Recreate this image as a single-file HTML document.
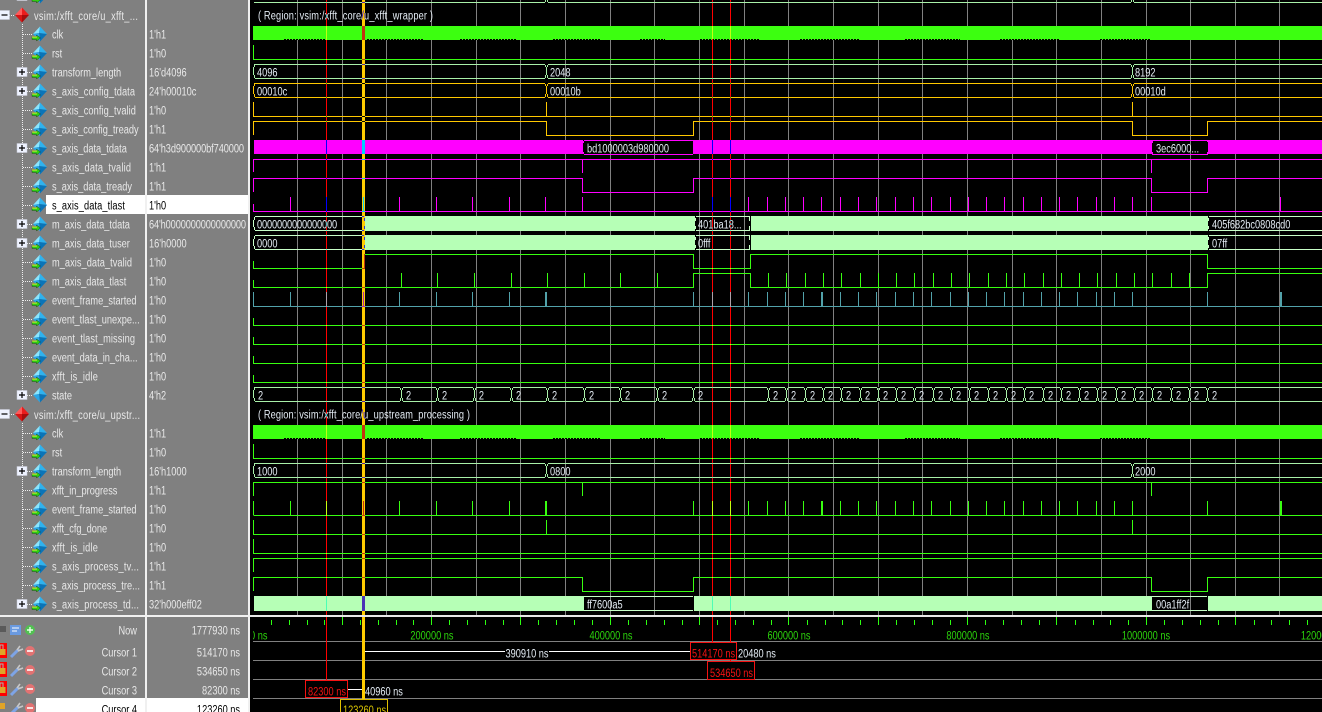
<!DOCTYPE html>
<html><head><meta charset="utf-8"><title>Wave</title>
<style>
html,body{margin:0;padding:0;background:#000;overflow:hidden}
svg{display:block;font-family:"Liberation Sans",sans-serif;font-size:12px}
.w{fill:none;stroke-width:1;shape-rendering:crispEdges}
.n{fill:#e8e8e8}
.t{fill:#e4ecf4}
.r{fill:#2cd40c}
.k{fill:#000}
.red{fill:#f41212}
</style></head><body>
<svg width="1322" height="712" viewBox="0 0 1322 712" xmlns="http://www.w3.org/2000/svg">
<defs>
<path id="f" d="M290.5 0v14M326.5 0v14M363.5 0v14M399.5 0v14M436.5 0v14M472.5 0v14M509.5 0v14M545.5 0v14M546.5 0v14M693.5 0v14M712.5 0v14M730.5 0v14M748.5 0v14M767.5 0v14M785.5 0v14M803.5 0v14M821.5 0v14M822.5 0v14M840.5 0v14M858.5 0v14M876.5 0v14M895.5 0v14M913.5 0v14M931.5 0v14M950.5 0v14M968.5 0v14M986.5 0v14M1004.5 0v14M1023.5 0v14M1041.5 0v14M1059.5 0v14M1077.5 0v14M1096.5 0v14M1114.5 0v14M1132.5 0v14M1207.5 0v14M1280.5 0v14M1281.5 0v14"/>
<g id="c"><rect x="-1" y="-7" width="3" height="1" fill="#000" stroke="none"/><rect x="-1" y="7" width="3" height="1" fill="#000" stroke="none"/><path d="M-.5 -6V-4M1.5 -6V-4M.5 -4V4M-.5 4V7M1.5 4V7" fill="none"/></g>
<path id="s" d="M1.5 -7V-4M.5 -4V4M1.5 4V7" fill="none"/>
<g id="dm"><polygon points="-7,0 0,-7.5 -1,-1" fill="#8ae6ff"/><polygon points="0,-7.5 7,0 -1,-1" fill="#2fb2ee"/><polygon points="7,0 0,7.5 -1,-1" fill="#0a74b8"/><polygon points="0,7.5 -7,0 -1,-1" fill="#2aa6e6"/></g>
<g id="a"><use href="#dm"/><polygon points="-8,2.5 -3.5,2.5 -3.5,1 0.5,4 -3.5,7 -3.5,5.5 -8,5.5" fill="#2fcf14" stroke="#14300c" stroke-width=".4"/><path d="M-8 3H-3" stroke="#e8f040" stroke-width="1"/></g>
<g id="rd"><polygon points="-7,0 0,-7.5 0,0" fill="#ff5a5a"/><polygon points="0,-7.5 7,0 0,0" fill="#ea1c1c"/><polygon points="7,0 0,7.5 0,0" fill="#a80c0c"/><polygon points="0,7.5 -7,0 0,0" fill="#d81414"/></g>
<g id="p"><rect x="-5" y="-4.5" width="10" height="9" fill="#eef2ff" stroke="#c8ccd8" stroke-width=".5"/><path d="M-3 0H3M0 -3V3" stroke="#000" stroke-width="1.2"/></g>
<g id="m"><rect x="-5" y="-4.5" width="10" height="9" fill="#eef2ff" stroke="#c8ccd8" stroke-width=".5"/><path d="M-3 0H3" stroke="#000" stroke-width="1.2"/></g>
<g id="tb"><path d="M11 657L19 649" stroke="#7ea4e6" stroke-width="3"/><path d="M17 650L20 646M18 651L23 649" stroke="#c8c8c8" stroke-width="1.6"/><circle cx="30" cy="651" r="5" fill="#e27272"/><path d="M27 651H33" stroke="#fff" stroke-width="1.6"/></g>
<g id="lk"><rect x="0" y="643" width="7" height="15" fill="#f00"/><rect x="0" y="649" width="5.5" height="6" fill="#e0a428"/><path d="M0 649V645H3V649" fill="none" stroke="#b0b0b0" stroke-width="1"/></g>
<clipPath id="cr"><rect x="253" y="617" width="1069" height="25"/></clipPath>
</defs>

<rect width="1322" height="712" fill="#000"/>

<!-- grid -->
<path class="w" stroke="#808080" d="M297.5 0V615M342.5 0V615M386.5 0V615M431.5 0V615M476.5 0V615M520.5 0V615M565.5 0V615M610.5 0V615M654.5 0V615M699.5 0V615M744.5 0V615M788.5 0V615M833.5 0V615M878.5 0V615M922.5 0V615M967.5 0V615M1012.5 0V615M1056.5 0V615M1101.5 0V615M1146.5 0V615M1190.5 0V615M1235.5 0V615M1279.5 0V615"/>

<!-- fills -->
<rect x="253" y="26" width="1069" height="14" fill="#3cff10"/>
<path class="w" stroke="#000" stroke-dasharray="2 1" d="M284 39.5H325M367 39.5H423M460 39.5H517M553 39.5H600M640 39.5H665M700 39.5H760M800 39.5H860M905 39.5H960M1000 39.5H1060M1100 39.5H1150"/>
<rect x="253" y="425" width="1069" height="14" fill="#3cff10"/>
<path class="w" stroke="#000" stroke-dasharray="2 1" d="M284 438.5H325M367 438.5H423M460 438.5H517M553 438.5H600M640 438.5H665M700 438.5H760M800 438.5H860M905 438.5H960M1000 438.5H1060M1100 438.5H1150"/>

<rect x="254" y="140" width="329" height="14" fill="#ff00ff"/>
<rect x="693" y="140" width="459" height="14" fill="#ff00ff"/>
<rect x="1208" y="140" width="114" height="14" fill="#ff00ff"/>
<rect x="365" y="216" width="330" height="15" fill="#b6ffb6"/>
<rect x="751" y="216" width="457" height="15" fill="#b6ffb6"/>
<rect x="365" y="235" width="330" height="15" fill="#b6ffb6"/>
<rect x="751" y="235" width="457" height="15" fill="#b6ffb6"/>
<rect x="254" y="596" width="330" height="15" fill="#b6ffb6"/>
<rect x="694" y="596" width="458" height="15" fill="#b6ffb6"/>
<rect x="1208" y="596" width="114" height="15" fill="#b6ffb6"/>

<!-- partial row at top -->
<g class="w" stroke="#a8f0a8"><path d="M254 2.5H1322"/><use href="#c" x="546" y="-5"/><use href="#c" x="1132" y="-5"/></g>

<!-- transform_length -->
<g class="w" stroke="#a8f0a8"><path d="M255 64.5H1322M255 78.5H1322"/><use href="#s" x="253" y="71"/><use href="#c" x="546" y="71"/><use href="#c" x="1132" y="71"/></g>
<!-- config tdata -->
<g class="w" stroke="#ffc800"><path d="M255 83.5H1322M255 97.5H1322"/><use href="#s" x="253" y="90"/><use href="#c" x="546" y="90"/><use href="#c" x="1132" y="90"/>
<path d="M253.5 102V116.5H1322M546.5 102V116M1132.5 102V116"/>
<path d="M253.5 135V121.5H546.5V135.5H693.5V121.5H1132.5V135.5H1207.5V121.5H1322"/></g>
<!-- magenta -->
<g class="w" stroke="#ff00ff">
<path d="M584 140.5H693M584 154.5H693M1152 140.5H1207M1152 154.5H1207M583.5 141V143M583.5 152V154M693.5 141V143M693.5 152V154M1152.5 141V143M1152.5 152V154M1207.5 140V142M1207.5 152V155"/>
<path d="M253.5 172V159.5H1322M582.5 160V173M1151.5 160V173"/>
<path d="M253.5 192V178.5H582.5V192.5H693.5V178.5H1151.5V192.5H1207.5V178.5H1322"/>
<path d="M253.5 204V211.5H1322M290.5 197v14M326.5 197v14M363.5 197v14M399.5 197v14M436.5 197v14M472.5 197v14M509.5 197v14M545.5 197v14M582.5 197v14M712.5 197v14M730.5 197v14M748.5 197v14M767.5 197v14M785.5 197v14M803.5 197v14M821.5 197v14M840.5 197v14M858.5 197v14M876.5 197v14M895.5 197v14M913.5 197v14M931.5 197v14M950.5 197v14M968.5 197v14M986.5 197v14M1004.5 197v14M1023.5 197v14M1041.5 197v14M1059.5 197v14M1077.5 197v14M1096.5 197v14M1114.5 197v14M1132.5 197v14M1151.5 197v14M1280.5 197v14"/>
</g>
<!-- m_axis buses -->
<g class="w" stroke="#c8ffc8">
<path d="M255 216.5H364M255 230.5H364M696 216.5H750M696 230.5H750M1209 216.5H1322M1209 230.5H1322M254.5 217V220M253.5 220V227M254.5 227V230M364.5 218V221M364.5 226V229M695.5 218V221M695.5 226V229M749.5 217V221M749.5 226V230M1208.5 218V221M1208.5 226V229"/>
<path d="M255 235.5H364M255 249.5H364M696 235.5H750M696 249.5H750M1209 235.5H1322M1209 249.5H1322M254.5 236V239M253.5 239V246M254.5 246V249M364.5 237V240M364.5 245V248M695.5 237V240M695.5 245V248M749.5 236V240M749.5 245V249M1208.5 237V240M1208.5 245V248"/>
</g>
<!-- greens -->
<g class="w" stroke="#38ff10">
<path d="M253.5 45V59.5H1322"/>
<path d="M253.5 261V268.5H364.5V254.5H693.5V268.5H750.5V254.5H1207.5V268.5H1322"/>
<path d="M253.5 280V287.5H693.5V273.5H750.5V287.5H1207.5V273.5H1322M401.5 273v14M437.5 273v14M474.5 273v14M511.5 273v14M547.5 273v14M584.5 273v14M620.5 273v14M657.5 273v14M768.5 273v14M786.5 273v14M805.5 273v14M823.5 273v14M841.5 273v14M860.5 273v14M878.5 273v14M896.5 273v14M914.5 273v14M933.5 273v14M951.5 273v14M969.5 273v14M988.5 273v14M1006.5 273v14M1024.5 273v14M1043.5 273v14M1061.5 273v14M1079.5 273v14M1097.5 273v14M1116.5 273v14M1134.5 273v14M1152.5 273v14M1171.5 273v14M1189.5 273v14"/>
<path d="M253.5 318V325.5H1322M253.5 337V344.5H1322M253.5 356V363.5H1322M253.5 375V382.5H1322"/>
<path d="M253.5 444V458.5H1322"/>
<path d="M253.5 496V482.5H1322M582.5 483V496M1151.5 483V496"/>
<path d="M253.5 515.5H1322M253.5 501v14"/>
<use href="#f" y="501"/>
<path d="M253.5 520V534.5H1322M546.5 520V534M1132.5 520V534"/>
<path d="M253.5 539V553.5H1322"/>
<path d="M253.5 572V558.5H1322"/>
<path d="M253.5 591V577.5H582.5V591.5H693.5V577.5H1151.5V591.5H1207.5V577.5H1322"/>
</g>
<!-- frame teal -->
<g class="w" stroke="#52a2aa"><path d="M253.5 292V306.5H1322"/><use href="#f" y="292"/></g>
<!-- state -->
<g class="w" stroke="#a8f0a8"><path d="M255 387.5H1322M255 401.5H1322"/>
<use href="#s" x="253" y="394"/><use href="#c" x="401" y="394"/><use href="#c" x="437" y="394"/><use href="#c" x="474" y="394"/><use href="#c" x="511" y="394"/><use href="#c" x="547" y="394"/><use href="#c" x="584" y="394"/><use href="#c" x="620" y="394"/><use href="#c" x="657" y="394"/><use href="#c" x="693" y="394"/><use href="#c" x="768" y="394"/><use href="#c" x="786" y="394"/><use href="#c" x="805" y="394"/><use href="#c" x="823" y="394"/><use href="#c" x="841" y="394"/><use href="#c" x="860" y="394"/><use href="#c" x="878" y="394"/><use href="#c" x="896" y="394"/><use href="#c" x="914" y="394"/><use href="#c" x="933" y="394"/><use href="#c" x="951" y="394"/><use href="#c" x="969" y="394"/><use href="#c" x="988" y="394"/><use href="#c" x="1006" y="394"/><use href="#c" x="1024" y="394"/><use href="#c" x="1043" y="394"/><use href="#c" x="1061" y="394"/><use href="#c" x="1079" y="394"/><use href="#c" x="1097" y="394"/><use href="#c" x="1116" y="394"/><use href="#c" x="1134" y="394"/><use href="#c" x="1152" y="394"/><use href="#c" x="1171" y="394"/><use href="#c" x="1189" y="394"/><use href="#c" x="1207" y="394"/>
<path d="M255 463.5H1322M255 477.5H1322"/><use href="#s" x="253" y="470"/><use href="#c" x="546" y="470"/><use href="#c" x="1132" y="470"/></g>
<g class="w" stroke="#c8ffc8"><path d="M584 596.5H693M584 610.5H693M1152 596.5H1207M1152 610.5H1207"/></g>

<!-- wave text -->
<g transform="scale(.77 1)" class="t">
<text x="335" y="19.5" textLength="227.3">( Region: vsim:/xfft_core/u_xfft_wrapper )</text>
<text x="333.8" y="76.5">4096</text><text x="714.3" y="76.5">2048</text><text x="1474" y="76.5">8192</text>
<text x="333.8" y="95.5">00010c</text><text x="714.3" y="95.5">00010b</text><text x="1474" y="95.5">00010d</text>
<text x="762.3" y="152.5">bd1000003d980000</text><text x="1501.3" y="152.5">3ec6000...</text>
<text x="333.8" y="228.5" textLength="104">0000000000000000</text><text x="906.5" y="228.5">401ba18...</text><text x="1574" y="228.5">405f682bc0808cd0</text>
<text x="333.8" y="247.5">0000</text><text x="906.5" y="247.5">0fff</text><text x="1574" y="247.5">07ff</text>
<text x="335 527.3 574 622 670.1 716.9 764.9 811.7 859.7 906.5 1003.9 1027.3 1051.9 1075.3 1098.7 1123.4 1146.8 1170.1 1193.5 1218.2 1241.6 1264.9 1289.6 1313 1336.4 1361 1384.4 1407.8 1431.2 1455.8 1479.2 1502.6 1527.3 1550.6 1574" y="399.5">22222222222222222222222222222222222</text>
<text x="335" y="418.5" textLength="275.3">( Region: vsim:/xfft_core/u_upstream_processing )</text>
<text x="333.8" y="475.5">1000</text><text x="714.3" y="475.5">0800</text><text x="1474" y="475.5">2000</text>
<text x="762.3" y="608.5">ff7600a5</text><text x="1501.3" y="608.5">00a1ff2f</text>
</g>

<!-- wave cursors -->
<g style="mix-blend-mode:difference" class="w">
<rect x="362" y="0" width="3" height="615" fill="#ffcc00" stroke="none"/>
<path stroke="#ff0000" d="M326.5 0V615M712.5 0V615M730.5 0V615"/>
</g>

<!-- separators / left panel -->
<rect x="250" y="615" width="1072" height="2" fill="#e8e8e8"/>

<rect x="0" y="0" width="145" height="712" fill="#808080"/>
<rect x="147" y="0" width="101" height="712" fill="#808080"/>
<rect x="145" y="0" width="2" height="712" fill="#f0f0f0"/>
<rect x="248" y="0" width="2" height="712" fill="#f0f0f0"/>
<rect x="0" y="615" width="250" height="2" fill="#f0f0f0"/>

<rect x="46" y="195" width="99" height="19" fill="#fff"/>
<rect x="147" y="195" width="101" height="19" fill="#fff"/>
<rect x="36" y="698" width="109" height="14" fill="#fff"/>
<rect x="147" y="698" width="101" height="14" fill="#fff"/>

<!-- tree dots -->
<path fill="none" stroke="#eee" stroke-dasharray="1 1" shape-rendering="crispEdges" d="M22.5 24V395M22.5 423V604M23 34.5H32M23 53.5H32M27 72.5H32M27 91.5H32M23 110.5H32M23 129.5H32M27 148.5H32M23 167.5H32M23 186.5H32M23 205.5H32M27 224.5H32M27 243.5H32M23 262.5H32M23 281.5H32M23 300.5H32M23 319.5H32M23 338.5H32M23 357.5H32M23 376.5H32M27 395.5H32M23 433.5H32M23 452.5H32M27 471.5H32M23 490.5H32M23 509.5H32M23 528.5H32M23 547.5H32M23 566.5H32M23 585.5H32M27 604.5H32M9 15.5H15M9 414.5H15"/>

<!-- tree boxes -->
<use href="#p" x="22" y="-4"/><use href="#a" x="40" y="-4"/>
<use href="#m" x="4.5" y="15"/><use href="#rd" x="22" y="15"/>
<use href="#m" x="4.5" y="414"/><use href="#rd" x="22" y="414"/>
<use href="#p" x="22" y="72"/><use href="#p" x="22" y="91"/><use href="#p" x="22" y="148"/><use href="#p" x="22" y="224"/><use href="#p" x="22" y="243"/><use href="#p" x="22" y="395"/><use href="#p" x="22" y="471"/><use href="#p" x="22" y="604"/>

<!-- signal icons -->
<use href="#a" x="40" y="34"/><use href="#a" x="40" y="53"/><use href="#a" x="40" y="72"/><use href="#a" x="40" y="91"/><use href="#a" x="40" y="110"/><use href="#a" x="40" y="129"/><use href="#a" x="40" y="148"/><use href="#a" x="40" y="167"/><use href="#a" x="40" y="186"/><use href="#a" x="40" y="205"/><use href="#a" x="40" y="224"/><use href="#a" x="40" y="243"/><use href="#a" x="40" y="262"/><use href="#a" x="40" y="281"/><use href="#a" x="40" y="300"/><use href="#a" x="40" y="319"/><use href="#a" x="40" y="338"/><use href="#a" x="40" y="357"/><use href="#a" x="40" y="376"/><use href="#dm" x="40" y="395"/><use href="#a" x="40" y="433"/><use href="#a" x="40" y="452"/><use href="#a" x="40" y="471"/><use href="#a" x="40" y="490"/><use href="#a" x="40" y="509"/><use href="#a" x="40" y="528"/><use href="#a" x="40" y="547"/><use href="#a" x="40" y="566"/><use href="#a" x="40" y="585"/><use href="#a" x="40" y="604"/>

<!-- names & values -->
<g transform="scale(.77 1)" class="n">
<text x="44.2" y="20" textLength="135">vsim:/xfft_core/u_xfft_...</text>
<text x="67.5" y="38.5">clk</text><text x="193.5" y="38.5">1'h1</text>
<text x="67.5" y="57.5">rst</text><text x="193.5" y="57.5">1'h0</text>
<text x="67.5" y="76.5">transform_length</text><text x="193.5" y="76.5">16'd4096</text>
<text x="67.5" y="95.5" textLength="107.8">s_axis_config_tdata</text><text x="193.5" y="95.5">24'h00010c</text>
<text x="67.5" y="114.5" textLength="109">s_axis_config_tvalid</text><text x="193.5" y="114.5">1'h0</text>
<text x="67.5" y="133.5">s_axis_config_tready</text><text x="193.5" y="133.5">1'h1</text>
<text x="67.5" y="152.5">s_axis_data_tdata</text><text x="193.5" y="152.5" textLength="123.4">64'h3d900000bf740000</text>
<text x="67.5" y="171.5" textLength="102.6">s_axis_data_tvalid</text><text x="193.5" y="171.5">1'h1</text>
<text x="67.5" y="190.5">s_axis_data_tready</text><text x="193.5" y="190.5">1'h1</text>
<text x="67.5" y="209.5" class="k" textLength="94.8">s_axis_data_tlast</text><text x="193.5" y="209.5" class="k">1'h0</text>
<text x="67.5" y="228.5">m_axis_data_tdata</text><text x="193.5" y="228.5" textLength="126">64'h0000000000000000</text>
<text x="67.5" y="247.5">m_axis_data_tuser</text><text x="193.5" y="247.5">16'h0000</text>
<text x="67.5" y="266.5" textLength="103.9">m_axis_data_tvalid</text><text x="193.5" y="266.5">1'h0</text>
<text x="67.5" y="285.5">m_axis_data_tlast</text><text x="193.5" y="285.5">1'h0</text>
<text x="67.5" y="304.5">event_frame_started</text><text x="193.5" y="304.5">1'h0</text>
<text x="67.5" y="323.5">event_tlast_unexpe...</text><text x="193.5" y="323.5">1'h0</text>
<text x="67.5" y="342.5" textLength="107.8">event_tlast_missing</text><text x="193.5" y="342.5">1'h0</text>
<text x="67.5" y="361.5">event_data_in_cha...</text><text x="193.5" y="361.5">1'h0</text>
<text x="67.5" y="380.5" textLength="59.7">xfft_is_idle</text><text x="193.5" y="380.5">1'h0</text>
<text x="67.5" y="399.5">state</text><text x="193.5" y="399.5">4'h2</text>
<text x="44.2" y="419" textLength="137.7">vsim:/xfft_core/u_upstr...</text>
<text x="67.5" y="437.5">clk</text><text x="193.5" y="437.5">1'h1</text>
<text x="67.5" y="456.5">rst</text><text x="193.5" y="456.5">1'h0</text>
<text x="67.5" y="475.5">transform_length</text><text x="193.5" y="475.5">16'h1000</text>
<text x="67.5" y="494.5">xfft_in_progress</text><text x="193.5" y="494.5">1'h1</text>
<text x="67.5" y="513.5">event_frame_started</text><text x="193.5" y="513.5">1'h0</text>
<text x="67.5" y="532.5">xfft_cfg_done</text><text x="193.5" y="532.5">1'h0</text>
<text x="67.5" y="551.5" textLength="59.7">xfft_is_idle</text><text x="193.5" y="551.5">1'h0</text>
<text x="67.5" y="570.5" textLength="113">s_axis_process_tv...</text><text x="193.5" y="570.5">1'h1</text>
<text x="67.5" y="589.5" textLength="114.3">s_axis_process_tre...</text><text x="193.5" y="589.5">1'h1</text>
<text x="67.5" y="608.5" textLength="113">s_axis_process_td...</text><text x="193.5" y="608.5">32'h000eff02</text>
<g text-anchor="end">
<text x="177.9" y="634.5">Now</text><text x="311.7" y="634.5">1777930 ns</text>
<text x="177.9" y="656.5">Cursor 1</text><text x="311.7" y="656.5">514170 ns</text>
<text x="177.9" y="675.5">Cursor 2</text><text x="311.7" y="675.5">534650 ns</text>
<text x="177.9" y="694.5">Cursor 3</text><text x="311.7" y="694.5">82300 ns</text>
<text x="177.9" y="713.5" class="k">Cursor 4</text><text x="311.7" y="713.5" class="k">123260 ns</text>
</g>
</g>

<!-- bottom-left icons -->
<rect x="0" y="626" width="6" height="6" fill="#5a5a5a"/>
<rect x="10" y="625" width="11" height="10" fill="#6a9ae0"/><path d="M12 628H19M12 631H17" stroke="#fff"/>
<circle cx="30" cy="630" r="5" fill="#52c052"/><path d="M27 630H33M30 627V633" stroke="#e8ffe8" stroke-width="1.4"/>
<use href="#lk"/><use href="#tb"/>
<use href="#lk" y="19"/><use href="#tb" y="19"/>
<use href="#lk" y="38"/><use href="#tb" y="38"/>
<rect x="0" y="703" width="5" height="6" fill="#e0a428"/><use href="#tb" y="57"/>

<!-- ruler -->
<path class="w" stroke="#2cff10" d="M271.5 620v5M289.5 620v5M307.5 620v5M324.5 620v5M360.5 620v5M378.5 620v5M396.5 620v5M413.5 620v5M449.5 620v5M467.5 620v5M485.5 620v5M503.5 620v5M538.5 620v5M556.5 620v5M574.5 620v5M592.5 620v5M628.5 620v5M646.5 620v5M664.5 620v5M682.5 620v5M717.5 620v5M735.5 620v5M753.5 620v5M771.5 620v5M807.5 620v5M825.5 620v5M842.5 620v5M860.5 620v5M896.5 620v5M914.5 620v5M932.5 620v5M950.5 620v5M985.5 620v5M1003.5 620v5M1021.5 620v5M1039.5 620v5M1075.5 620v5M1093.5 620v5M1110.5 620v5M1128.5 620v5M1164.5 620v5M1182.5 620v5M1200.5 620v5M1218.5 620v5M1254.5 620v5M1271.5 620v5M1289.5 620v5M1307.5 620v5M342.5 617v8M431.5 617v8M520.5 617v8M610.5 617v8M699.5 617v8M788.5 617v8M878.5 617v8M967.5 617v8M1056.5 617v8M1146.5 617v8M1235.5 617v8"/>
<g clip-path="url(#cr)"><g transform="scale(.77 1)" class="r">
<text x="324.7" y="639.5">0 ns</text>
<g text-anchor="middle">
<text x="561" y="639.5">200000 ns</text><text x="793.5" y="639.5">400000 ns</text><text x="1024.7" y="639.5">600000 ns</text><text x="1257.1" y="639.5">800000 ns</text><text x="1488.3" y="639.5">1000000 ns</text><text x="1720.8" y="639.5">1200000 ns</text>
</g></g></g>
<path class="w" stroke="#808080" d="M253 641.5H1322M253 660.5H1322M253 679.5H1322M253 698.5H1322"/>

<!-- cursors in ruler -->
<path class="w" stroke="#ff0000" d="M326.5 617V680M712.5 617V642M730.5 617V661"/>
<rect x="362" y="617" width="3" height="82" fill="#ffcc00"/>
<path class="w" stroke="#fff" d="M365 651.5H505M549 651.5H690M348 689.5H362"/>
<g class="w" fill="#000">
<rect x="690.5" y="642.5" width="46" height="17" fill="#000" stroke="#f41212"/>
<rect x="707.5" y="661.5" width="47" height="18" fill="#000" stroke="#f41212"/>
<rect x="305.5" y="680.5" width="42" height="17" fill="#000" stroke="#f41212"/>
<rect x="340.5" y="699.5" width="47" height="18" fill="#000" stroke="#e0c000"/>
</g>
<g transform="scale(.77 1)">
<text x="898.7" y="657.5" class="red">514170 ns</text>
<text x="922" y="677" class="red">534650 ns</text>
<text x="400" y="695.5" class="red">82300 ns</text>
<text x="445.5" y="714" fill="#d8c400">123260 ns</text>
<text x="474" y="695.5" class="t">40960 ns</text>
<text x="958.4" y="657.5" class="t">20480 ns</text>
<text x="684.4" y="657.5" class="t" text-anchor="middle">390910 ns</text>
</g>
</svg>
</body></html>
